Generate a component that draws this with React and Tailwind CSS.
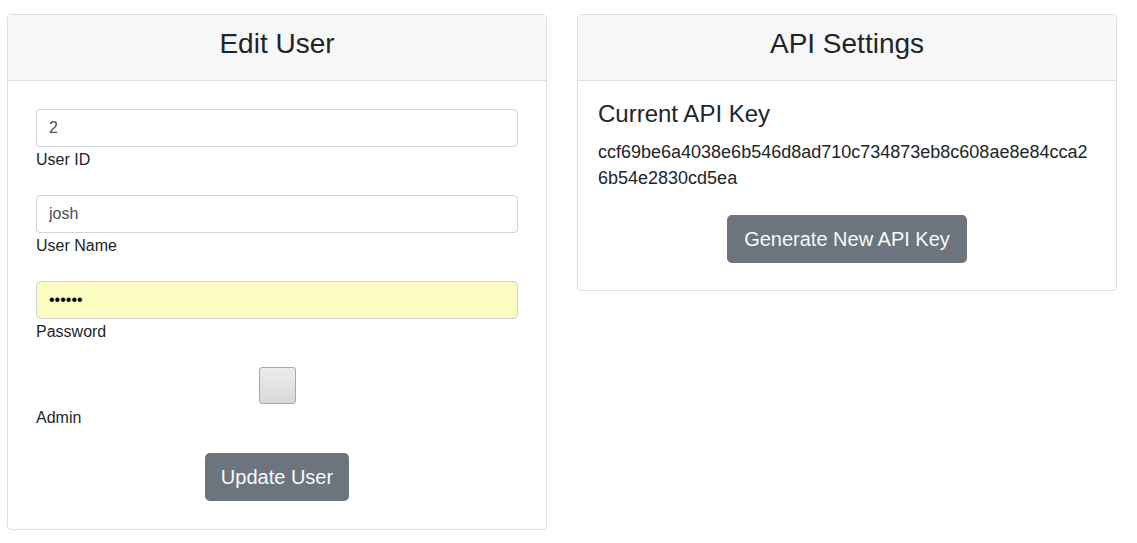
import React from "react";

const font = { fontFamily: '"Liberation Sans", Arial, sans-serif' };

function Field({ label, type = "text", value, autofill }) {
  return (
    <div className="mb-[23px] flex flex-col">
      <input
        type={type}
        defaultValue={value}
        readOnly
        className={
          "h-[38px] w-full rounded-[4px] border border-[#ced4da] px-3 text-base outline-none " +
          (autofill ? "bg-[#fbfcc0] text-black" : "bg-white text-[#495057]")
        }
      />
      <label className="pt-px text-base leading-6 text-[#212529]">{label}</label>
    </div>
  );
}

function CardHeader({ title }) {
  return (
    <div className="border-b border-[#dfdfdf] bg-[#f7f7f7] px-5 pt-3 pb-5 text-center">
      <h3 className="text-[28px] leading-[33px] text-[#212529]">{title}</h3>
    </div>
  );
}

export default function App() {
  return (
    <div className="flex items-start gap-[30px] bg-white pt-[14px] pl-[7px]" style={font}>
      {/* Edit user card */}
      <div className="w-[540px] rounded-[4px] border border-[#dfdfdf]">
        <CardHeader title="Edit User" />
        <div className="flex flex-col p-7">
          <Field label="User ID" value="2" />
          <Field label="User Name" value="josh" />
          <Field label="Password" type="password" value="secret" autofill />
          <div className="flex justify-center">
            <input
              type="checkbox"
              className="h-[37px] w-[37px] appearance-none rounded-[3px] border border-[#a8a8a8] bg-gradient-to-b from-[#ececec] to-[#d9d9d9]"
            />
          </div>
          <label className="pt-[2px] text-base leading-6 text-[#212529]">Admin</label>
          <div className="mt-[23px] flex justify-center">
            <button className="h-12 rounded-[5px] bg-[#6c757d] px-4 text-[20px] text-[#f8f9fa]">
              Update User
            </button>
          </div>
        </div>
      </div>

      {/* API settings card */}
      <div className="w-[540px] rounded-[4px] border border-[#dfdfdf]">
        <CardHeader title="API Settings" />
        <div className="flex flex-col px-5 pt-[18px] pb-[27px]">
          <h4 className="mb-[11px] text-2xl leading-[29px] text-[#212529]">Current API Key</h4>
          <p className="break-all text-[18px] leading-[26px] text-[#212529]">
            ccf69be6a4038e6b546d8ad710c734873eb8c608ae8e84cca26b54e2830cd5ea
          </p>
          <div className="mt-6 flex justify-center">
            <button className="h-12 rounded-[5px] bg-[#6c757d] px-[17px] text-[20px] text-[#f8f9fa]">
              Generate New API Key
            </button>
          </div>
        </div>
      </div>
    </div>
  );
}
